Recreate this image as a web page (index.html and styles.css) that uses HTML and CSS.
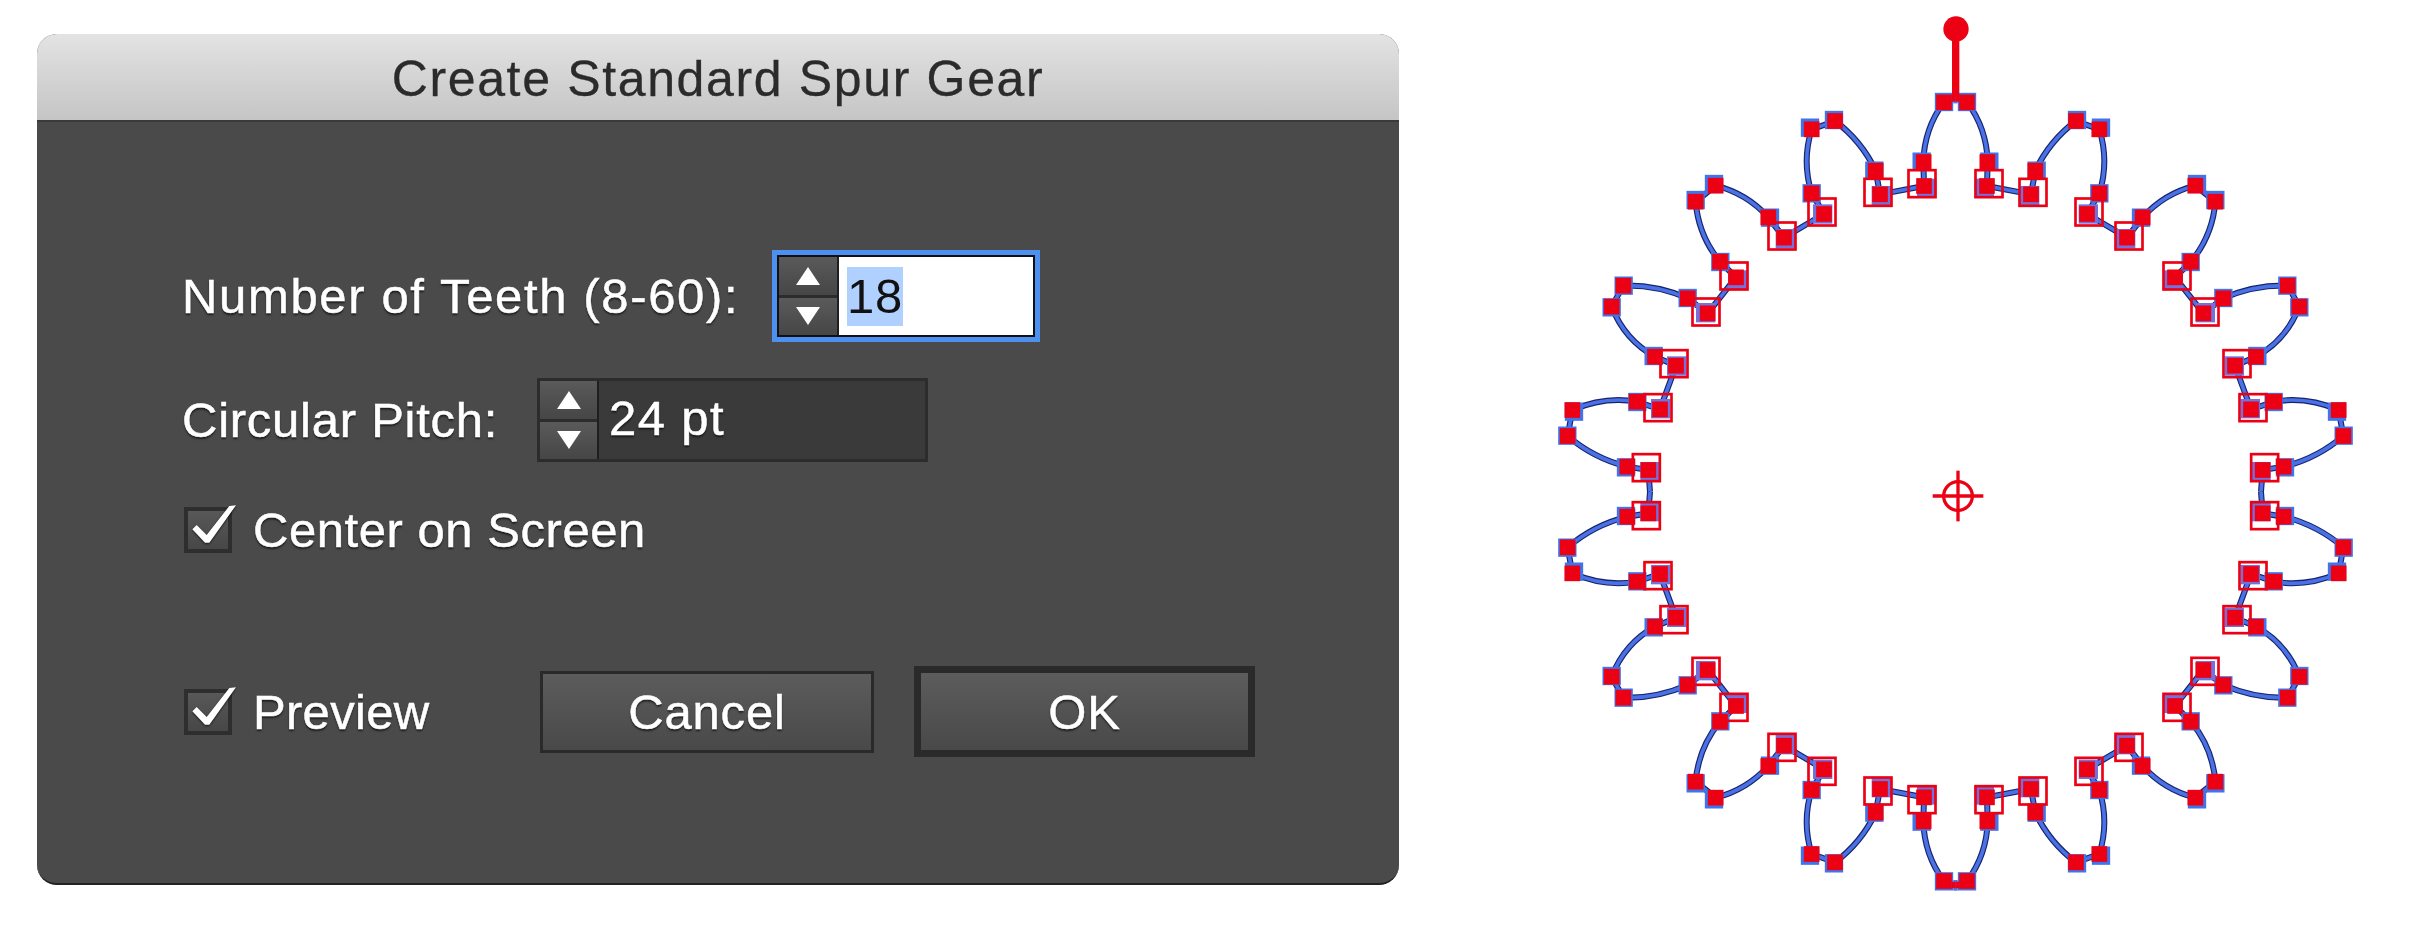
FILE: index.html
```html
<!DOCTYPE html>
<html lang="en">
<head>
<meta charset="utf-8">
<title>Create Standard Spur Gear</title>
<link rel="stylesheet" href="styles.css">
</head>
<body>
<main class="page">
  <section class="dialog">
    <header class="titlebar">Create Standard Spur Gear</header>
    <div class="body">
      <div class="row row-teeth">
        <span class="label label-teeth">Number of Teeth (8-60):</span>
        <div class="focus-ring">
          <div class="field field-light">
            <div class="spin"><span class="spin-btn up"></span><span class="spin-btn down"></span></div>
            <div class="value value-light"><span class="selection">18</span></div>
          </div>
        </div>
      </div>
      <div class="row row-pitch">
        <span class="label label-pitch">Circular Pitch:</span>
        <div class="field field-dark">
          <div class="spin"><span class="spin-btn up"></span><span class="spin-btn down"></span></div>
          <div class="value value-dark">24 pt</div>
        </div>
      </div>
      <div class="row row-center">
        <span class="check"><svg class="tick" viewBox="72 72 168 150" aria-hidden="true"><path d="M97 148 L110 135 L140 165 L208 78 L228 76 L148 188 L135 188 Z"/></svg></span>
        <span class="label label-center">Center on Screen</span>
      </div>
      <div class="row row-actions">
        <span class="check"><svg class="tick" viewBox="72 72 168 150" aria-hidden="true"><path d="M97 148 L110 135 L140 165 L208 78 L228 76 L148 188 L135 188 Z"/></svg></span>
        <span class="label label-preview">Preview</span>
        <span class="button button-cancel">Cancel</span>
        <span class="button button-ok">OK</span>
      </div>
    </div>
  </section>

  <svg class="gear" viewBox="0 -240 2634 2856" aria-hidden="true">
    <defs>
      <rect id="b" class="anchor-blue" x="-27.5" y="-27.5" width="55" height="55"/>
      <rect id="p" class="anchor-purple" x="-29" y="-29" width="58" height="58"/>
      <rect id="r" class="anchor-red" x="-23.5" y="-23.5" width="47" height="47"/>
      <rect id="o" class="anchor-box" x="-40.5" y="-40.5" width="81" height="81"/>
      <path id="outline" d="M1212 66 Q1153 145 1150 245 L1152 318 L1020 343 L1007 272 Q964 182 885 123 L815 148 Q785 244 815 340 L852 402 L732 473 L685 412 Q620 340 527 317 L467 365 Q475 466 540 545 L588 592 L503 700 L443 655 Q350 614 250 617 L215 680 Q254 780 345 830 L408 857 L360 988 L290 965 Q195 948 97 990 L83 1068 Q161 1135 262 1160 L325 1170 L330 1235"/>
      <g id="quadrant">
        <use href="#outline" class="line-edge"/>
        <use href="#outline" class="line-core"/>
        <rect class="anchor-blue" x="1240" y="38" width="7" height="32"/>
        <use href="#b" x="1212" y="66"/><use href="#b" x="1145" y="245"/>
        <use href="#b" x="1003" y="272"/><use href="#b" x="882" y="120"/><use href="#b" x="810" y="143"/><use href="#b" x="815" y="340"/>
        <use href="#b" x="690" y="413"/><use href="#b" x="522" y="312"/><use href="#b" x="467" y="360"/><use href="#b" x="541" y="546"/>
        <use href="#b" x="443" y="654"/><use href="#b" x="251" y="617"/><use href="#b" x="215" y="682"/><use href="#b" x="341" y="828"/>
        <use href="#b" x="292" y="966"/><use href="#b" x="102" y="995"/><use href="#b" x="82" y="1067"/><use href="#b" x="258" y="1162"/>
        <use href="#p" x="1160" y="325"/><use href="#p" x="1024" y="347"/><use href="#p" x="848" y="402"/><use href="#p" x="736" y="476"/>
        <use href="#p" x="593" y="600"/><use href="#p" x="497" y="698"/><use href="#p" x="410" y="858"/><use href="#p" x="362" y="986"/><use href="#p" x="330" y="1175"/>
        <use href="#o" x="1146" y="311"/><use href="#o" x="1014" y="337"/><use href="#o" x="846" y="396"/><use href="#o" x="726" y="468"/>
        <use href="#o" x="582" y="588"/><use href="#o" x="498" y="696"/><use href="#o" x="402" y="851"/><use href="#o" x="354" y="983"/><use href="#o" x="319" y="1163"/>
        <rect class="anchor-red" x="1235" y="45" width="12" height="20"/>
        <use href="#r" x="1212" y="67"/><use href="#r" x="1151" y="246"/><use href="#r" x="1152" y="318"/>
        <use href="#r" x="1020" y="343"/><use href="#r" x="1007" y="272"/><use href="#r" x="885" y="123"/><use href="#r" x="815" y="148"/><use href="#r" x="815" y="340"/><use href="#r" x="852" y="402"/>
        <use href="#r" x="732" y="473"/><use href="#r" x="685" y="412"/><use href="#r" x="527" y="317"/><use href="#r" x="467" y="365"/><use href="#r" x="540" y="545"/><use href="#r" x="588" y="592"/>
        <use href="#r" x="503" y="700"/><use href="#r" x="443" y="655"/><use href="#r" x="250" y="617"/><use href="#r" x="215" y="680"/><use href="#r" x="345" y="830"/><use href="#r" x="408" y="857"/>
        <use href="#r" x="360" y="988"/><use href="#r" x="290" y="965"/><use href="#r" x="97" y="990"/><use href="#r" x="83" y="1068"/><use href="#r" x="262" y="1160"/><use href="#r" x="325" y="1170"/>
      </g>
    </defs>
    <use href="#quadrant"/>
    <use href="#quadrant" transform="matrix(-1 0 0 1 2493 0)"/>
    <use href="#quadrant" transform="matrix(1 0 0 -1 0 2470)"/>
    <use href="#quadrant" transform="matrix(-1 0 0 -1 2493 2470)"/>
    <circle class="handle-dot" cx="1248" cy="-153" r="38"/>
    <line class="handle-stem" x1="1247" y1="-153" x2="1247" y2="50"/>
    <g class="crosshair">
      <circle cx="1254" cy="1248" r="43"/>
      <line x1="1178" y1="1248" x2="1330" y2="1248"/>
      <line x1="1254" y1="1172" x2="1254" y2="1324"/>
    </g>
  </svg>
</main>
</body>
</html>
```
FILE: styles.css
```css
html, body {
  margin: 0;
  padding: 0;
  background: #fff;
}

.page {
  display: flex;
  align-items: flex-start;
  width: 2418px;
  height: 952px;
  overflow: hidden;
  padding-left: 37px;
  box-sizing: border-box;
  font-family: "Liberation Sans", Arial, sans-serif;
}

.dialog {
  flex: none;
  width: 1362px;
  margin-top: 34px;
  background: #4a4a4a;
  border-radius: 20px;
  border-bottom: 2px solid #222;
  overflow: hidden;
}

.titlebar {
  height: 86px;
  line-height: 91px;
  text-align: center;
  font-size: 50px;
  letter-spacing: 1.65px;
  color: #2b2b2b;
  background: linear-gradient(#e3e3e3, #c5c5c5);
  border-bottom: 2px solid #3a3a3a;
  -webkit-text-stroke: 0.3px #2b2b2b;
}

.body {
  padding: 128px 0 126px 145px;
}

.row {
  display: flex;
  align-items: center;
}

.row-pitch { margin-top: 36px; }
.row-center { margin-top: 45px; height: 46px; }
.row-actions { margin-top: 113px; height: 91px; }

.label {
  font-size: 49px;
  color: #fff;
  white-space: nowrap;
  text-shadow: 0 2px 2px rgba(0, 0, 0, 0.65);
  -webkit-text-stroke: 0.5px #fff;
}

.label-teeth { width: 590px; letter-spacing: 1.65px; }
.label-pitch { width: 355px; letter-spacing: 0.75px; }
.label-center { letter-spacing: 0.55px; }
.label-preview { width: 287px; letter-spacing: 0.3px; }

.focus-ring {
  width: 268px;
  height: 92px;
  box-sizing: border-box;
  padding: 5px;
  background: #4d90f0;
}

.field {
  display: flex;
  box-sizing: border-box;
  height: 100%;
  border: 2px solid #1c1c1c;
}

.field-light {
  border-color: #111;
}

.field-dark {
  width: 391px;
  height: 84px;
  border: 3px solid #2c2c2c;
  background: #3a3a3a;
}

.spin {
  flex: none;
  width: 60px;
  box-sizing: border-box;
  display: flex;
  flex-direction: column;
  gap: 3px;
  background: #2c2c2c;
  border-right: 2px solid #1f1f1f;
}

.field-dark .spin {
  width: 59px;
}

.spin-btn {
  flex: 1;
  position: relative;
  background: linear-gradient(#5a5a5a, #464646);
}

.spin-btn::before {
  content: "";
  position: absolute;
  left: 50%;
  top: 50%;
  margin: -9px 0 0 -12px;
  border-left: 12px solid transparent;
  border-right: 12px solid transparent;
}

.up::before {
  border-bottom: 18px solid #fff;
}

.down::before {
  border-top: 18px solid #fff;
}

.value {
  flex: 1;
  display: flex;
  align-items: center;
  font-size: 49px;
  letter-spacing: 0.8px;
}

.value-light {
  background: #fff;
  color: #111;
  padding-left: 8px;
}

.value-dark {
  color: #fff;
  padding: 0 0 4px 10px;
  letter-spacing: 1.4px;
  text-shadow: 0 2px 2px rgba(0, 0, 0, 0.65);
  -webkit-text-stroke: 0.5px #fff;
}

.selection {
  display: block;
  width: 56px;
  height: 59px;
  line-height: 59px;
  background: #b0d1ff;
  white-space: nowrap;
}

.check {
  flex: none;
  position: relative;
  width: 48px;
  height: 46px;
  box-sizing: border-box;
  margin: 0 21px 0 2px;
  border: 4px solid #2e2e2e;
  background: linear-gradient(#585858, #474747);
}

.tick {
  position: absolute;
  left: -4px;
  top: -7px;
  width: 56px;
  height: 50px;
  fill: #fff;
  filter: drop-shadow(0 1px 1px rgba(0, 0, 0, 0.7));
}

.button {
  flex: none;
  display: flex;
  align-items: center;
  justify-content: center;
  box-sizing: border-box;
  font-size: 49px;
  letter-spacing: 0.8px;
  color: #fff;
  background: linear-gradient(#5c5c5c, #494949);
  text-shadow: 0 2px 2px rgba(0, 0, 0, 0.65);
  -webkit-text-stroke: 0.5px #fff;
}

.button-cancel {
  width: 334px;
  height: 82px;
  border: 3px solid #2a2a2a;
}

.button-ok {
  width: 341px;
  height: 91px;
  margin-left: 40px;
  border: 7px solid #2a2a2a;
}

.gear {
  flex: none;
  width: 878px;
  height: 952px;
  margin-left: 141px;
}

.anchor-blue { fill: #4174ea; }
.anchor-purple { fill: #7470dc; }
.anchor-red { fill: #ec0014; }
.anchor-box { fill: none; stroke: #ec0014; stroke-width: 8; }

.line-edge { fill: none; stroke: #17246a; stroke-width: 18; }
.line-core { fill: none; stroke: #4a72e6; stroke-width: 11; }

.handle-dot { fill: #ec0014; }
.handle-stem { stroke: #ec0014; stroke-width: 22; }

.crosshair { fill: none; stroke: #ec0014; stroke-width: 10; }
```
